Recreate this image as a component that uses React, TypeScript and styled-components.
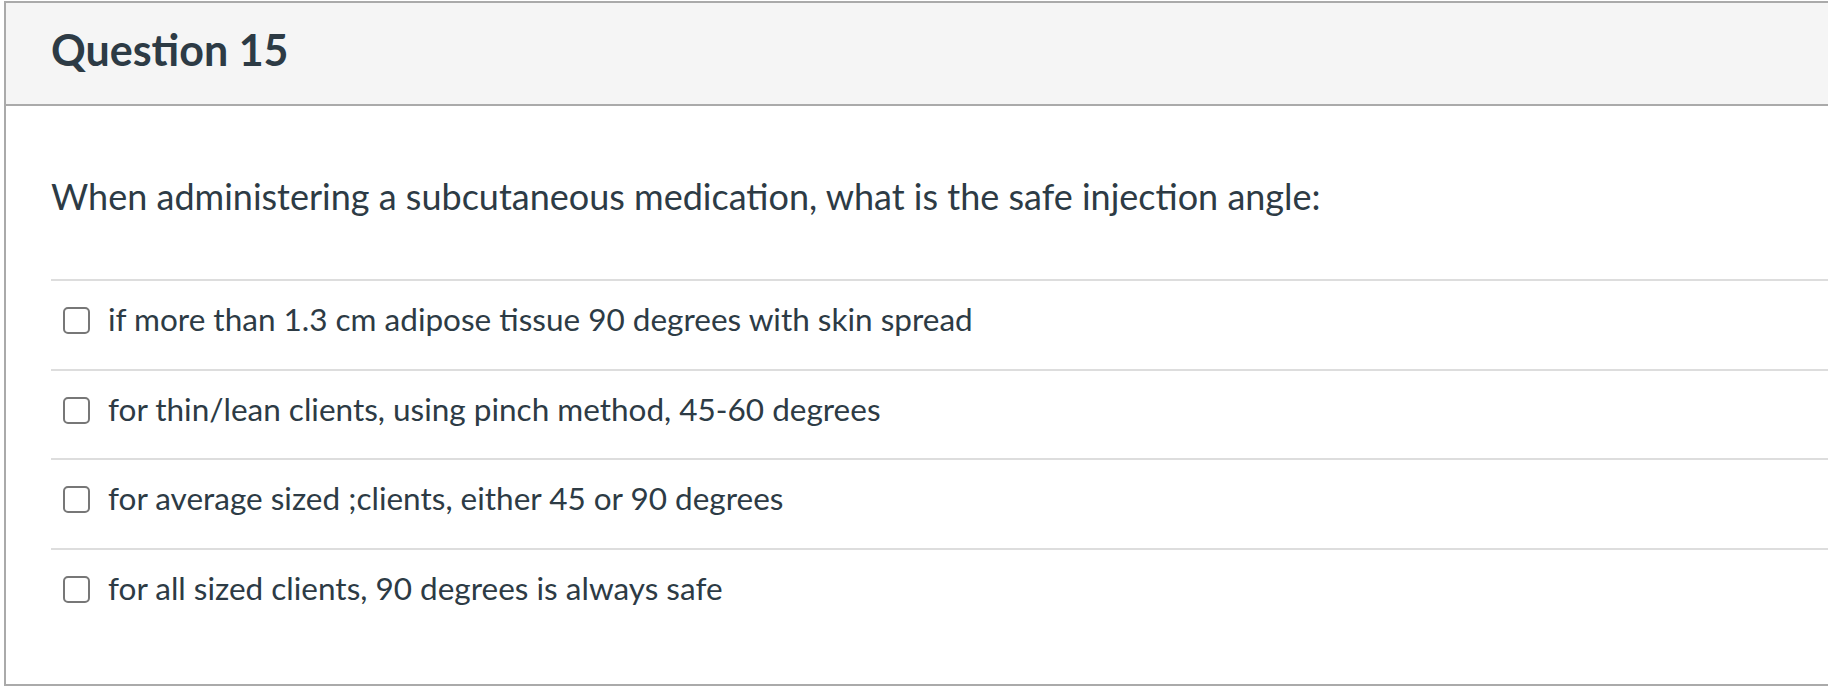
import styled, { createGlobalStyle } from 'styled-components';

const answers = [
  'if more than 1.3 cm adipose tissue 90 degrees with skin spread',
  'for thin/lean clients, using pinch method, 45-60 degrees',
  'for average sized ;clients, either 45 or 90 degrees',
  'for all sized clients, 90 degrees is always safe',
];

const GlobalStyle = createGlobalStyle`
  html, body {
    margin: 0;
    padding: 0;
    background: #ffffff;
    overflow: hidden;
  }
  body {
    font-family: Lato, "Open Sans", sans-serif;
    color: #2d3b45;
  }
`;

export default function App() {
  return (
    <>
      <GlobalStyle />
      <Page>
        <Card>
          <Header>
            <Title>Question 15</Title>
          </Header>
          <Body>
            <QuestionText>
              When administering a subcutaneous medication, what is the safe injection angle:
            </QuestionText>
            <AnswerList>
              {answers.map((answer) => (
                <Answer key={answer}>
                  <Checkbox type="checkbox" />
                  <AnswerLabel>{answer}</AnswerLabel>
                </Answer>
              ))}
            </AnswerList>
          </Body>
        </Card>
      </Page>
    </>
  );
}

const Page = styled.div`
  padding: 1px 0 0 4px;
`;

const Card = styled.div`
  border: 2px solid #aaaaaa;
  border-right: 0;
  height: 685px;
  box-sizing: border-box;
  display: flex;
  flex-direction: column;
`;

const Header = styled.div`
  height: 103px;
  box-sizing: border-box;
  padding: 21.3px 0 0 45px;
  background: #f5f5f5;
  border-bottom: 2px solid #aaaaaa;
  flex-shrink: 0;
`;

const Title = styled.h2`
  margin: 0;
  font-family: Lato, sans-serif;
  font-weight: 700;
  font-size: 43px;
  line-height: 51.6px;
  color: #2d3b45;
`;

const Body = styled.div`
  padding: 69px 0 0 45px;
`;

const QuestionText = styled.p`
  margin: 0 0 60.6px;
  font-size: 36px;
  line-height: 43.2px;
`;

const AnswerList = styled.div`
  display: flex;
  flex-direction: column;
`;

const Answer = styled.label`
  display: flex;
  align-items: flex-start;
  gap: 18px;
  border-top: 2px solid #dddddd;
  padding: 20px 0 30px 12px;
`;

const Checkbox = styled.input`
  appearance: none;
  margin: 6px 0 0;
  width: 27px;
  height: 27px;
  box-sizing: border-box;
  border: 2.5px solid #777777;
  border-radius: 5px;
  background: #ffffff;
  flex-shrink: 0;
`;

const AnswerLabel = styled.span`
  font-size: 31.5px;
  line-height: 37.8px;
`;
